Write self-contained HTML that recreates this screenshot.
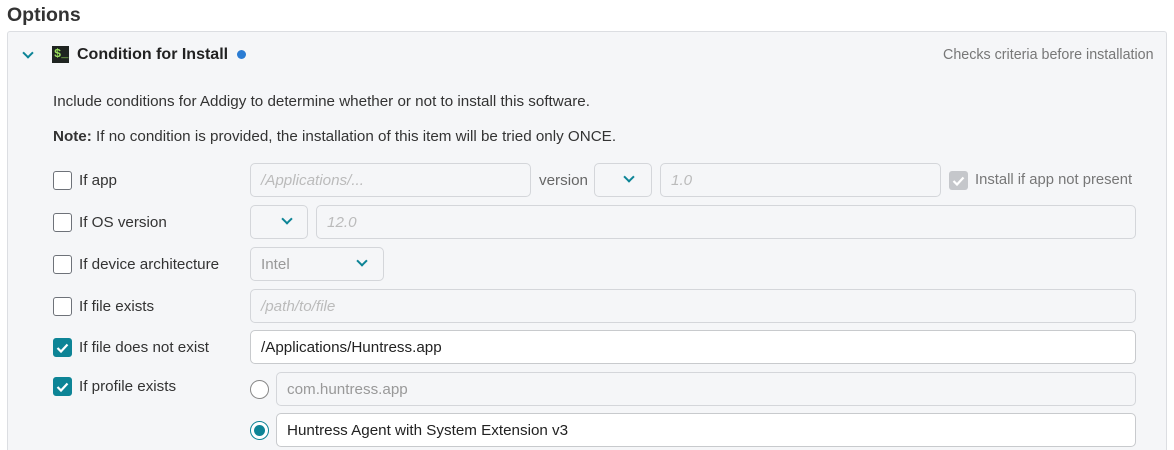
<!DOCTYPE html>
<html style="width:1174px;height:450px;overflow:hidden"><head><meta charset="utf-8"><style>
*{box-sizing:border-box;margin:0;padding:0}
body{width:1174px;height:450px;overflow:hidden;background:#fff;font-family:"Liberation Sans",sans-serif;color:#333;position:relative}
.a{position:absolute}
.panel{left:7px;top:31px;width:1160px;height:430px;background:#f5f6f8;border:1px solid #dcdee2;border-bottom:none;border-radius:3px 3px 0 0}
.t{font-size:15.2px;white-space:nowrap}
.cb{width:19px;height:19px;border:1.5px solid #6e7279;border-radius:3px;background:#fff}
.cb.on{background:#0d8496;border-color:#0d8496}
.in{border:1px solid #d4d6da;border-radius:5px;height:34px;font-size:15.2px;padding:0 10px;line-height:33px;color:#aaa;background:#f5f6f8;white-space:nowrap}
.in.w{background:#fff;color:#222;border-color:#c8cacd}
.ph{font-style:italic;color:#bbb}
.chev{position:absolute;width:8px;height:8px;border-right:2px solid #0d8496;border-bottom:2px solid #0d8496;transform:rotate(45deg)}
</style></head><body>
<div class="a" style="left:7px;top:4px;font-size:19.5px;font-weight:bold;color:#333">Options</div>
<div class="a panel" style="height:420px"></div>
<div class="chev" style="left:24px;top:49px"></div>
<div class="a" style="left:52px;top:46px;width:17px;height:17px;background:#1f2421;color:#9be15d;font-size:12px;font-weight:bold;line-height:17px;padding-left:2px;font-family:'Liberation Mono',monospace">$_</div>
<div class="a" style="left:77px;top:46px;font-size:16px;font-weight:bold;color:#222;white-space:nowrap">Condition for Install</div>
<div class="a" style="left:237px;top:50px;width:9px;height:9px;border-radius:50%;background:#2b7cd3"></div>
<div class="a t" style="left:943px;top:47px;font-size:14.3px;color:#777">Checks criteria before installation</div>
<div class="a t" style="left:53px;top:93px">Include conditions for Addigy to determine whether or not to install this software.</div>
<div class="a t" style="left:53px;top:128px"><b>Note:</b> If no condition is provided, the installation of this item will be tried only ONCE.</div>

<div class="a cb" style="left:53px;top:171px"></div><div class="a t" style="left:79px;top:172px">If app</div>
<div class="a cb" style="left:53px;top:213px"></div><div class="a t" style="left:79px;top:214px">If OS version</div>
<div class="a cb" style="left:53px;top:255px"></div><div class="a t" style="left:79px;top:256px">If device architecture</div>
<div class="a cb" style="left:53px;top:297px"></div><div class="a t" style="left:79px;top:298px">If file exists</div>
<div class="a cb on" style="left:53px;top:338px"></div><div class="a t" style="left:79px;top:339px">If file does not exist</div>
<div class="a cb on" style="left:53px;top:377px"></div><div class="a t" style="left:79px;top:378px">If profile exists</div>
<svg class="a" style="left:53px;top:338px" width="19" height="19"><path d="M4.5 10l3.5 3.5 6.5-7" stroke="#fff" stroke-width="2.2" fill="none"/></svg>
<svg class="a" style="left:53px;top:377px" width="19" height="19"><path d="M4.5 10l3.5 3.5 6.5-7" stroke="#fff" stroke-width="2.2" fill="none"/></svg>

<div class="a in" style="left:250px;top:163px;width:281px"><span class="ph">/Applications/...</span></div>
<div class="a t" style="left:539px;top:172px;color:#666">version</div>
<div class="a in" style="left:594px;top:163px;width:58px"></div><div class="chev" style="left:625px;top:173px"></div>
<div class="a in" style="left:660px;top:163px;width:281px"><span class="ph">1.0</span></div>
<div class="a" style="left:949px;top:171px;width:19px;height:19px;border-radius:3px;background:#c5c7cb"></div>
<svg class="a" style="left:949px;top:171px" width="19" height="19"><path d="M4.5 10l3.5 3.5 6.5-7" stroke="#fff" stroke-width="2.2" fill="none"/></svg>
<div class="a t" style="left:975px;top:172px;color:#777;font-size:14.8px">Install if app not present</div>

<div class="a in" style="left:250px;top:205px;width:58px"></div><div class="chev" style="left:283px;top:215px"></div>
<div class="a in" style="left:316px;top:205px;width:820px"><span class="ph">12.0</span></div>

<div class="a in" style="left:250px;top:247px;width:134px;color:#999">Intel</div><div class="chev" style="left:358px;top:257px"></div>

<div class="a in" style="left:250px;top:289px;width:886px"><span class="ph">/path/to/file</span></div>
<div class="a in w" style="left:250px;top:330px;width:886px">/Applications/Huntress.app</div>

<div class="a" style="left:250px;top:380px;width:19px;height:19px;border-radius:50%;border:1.5px solid #888;background:#fff"></div>
<div class="a in" style="left:276px;top:372px;width:860px;color:#999">com.huntress.app</div>
<div class="a" style="left:250px;top:421px;width:19px;height:19px;border-radius:50%;border:1.5px solid #0d8496;background:#fff"></div>
<div class="a" style="left:254px;top:425px;width:11px;height:11px;border-radius:50%;background:#0d8496"></div>
<div class="a in w" style="left:276px;top:413px;width:860px">Huntress Agent with System Extension v3</div>
</body></html>
